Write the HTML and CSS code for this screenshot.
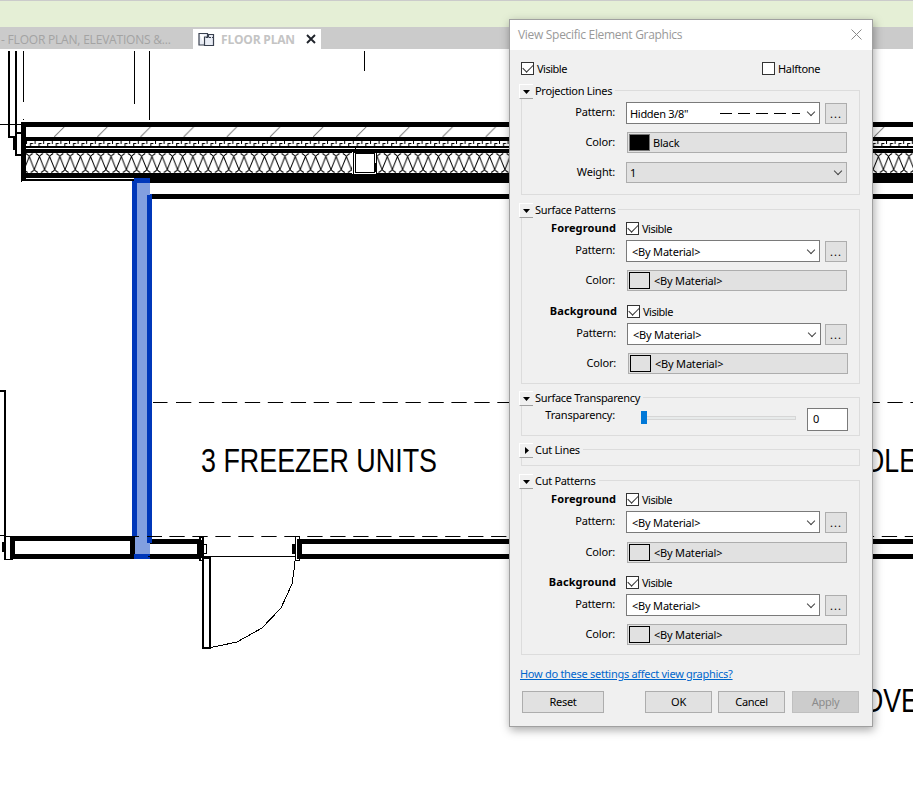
FILE: index.html
```
<!DOCTYPE html>
<html lang="en">
<head>
    <meta charset="UTF-8">
    <meta name="viewport" content="width=device-width, initial-scale=1.0">
    <title>Floor Plan</title>
    <link rel="stylesheet" href="styles.css">
</head>
<body>
    <div class="ribbon"></div>
    <div class="tabs">
        <div class="tab">- FLOOR PLAN, ELEVATIONS &amp;...</div>
        <div class="tab active">
            <svg class="sheet" width="17" height="15" viewBox="0 0 17 15">
                <path d="M1 1.500h8.500v3M1 1v12h5.500M6.500 13.500V5h4V2.500h5v11z" fill="#e9edf5" stroke="#39404f" stroke-width="1.200"/>
                <path d="M6.500 5.500v8M8 5.500h8" fill="none" stroke="#39404f" stroke-dasharray="2 1"/>
            </svg>
            <span>FLOOR PLAN</span>
            <svg class="close" width="10" height="10" viewBox="0 0 10 10">
                <path d="M1 1l8 8M9 1l-8 8" stroke="#1f232b" stroke-width="1.900"/>
            </svg>
        </div>
    </div>

    <svg class="plan" width="913" height="742" viewBox="0 49 913 742">
        <defs>
            <pattern id="brick" x="11" y="127" width="43.150" height="10" patternUnits="userSpaceOnUse">
                <path d="M0 10L10 0" stroke="#777" fill="none"/>
            </pattern>
            <pattern id="teeth" x="26" y="141" width="8.600" height="5" patternUnits="userSpaceOnUse">
                <path d="M0 0h1v3h-1zM4 2h1v3h-1zM5 2h2v1h-2z"/>
            </pattern>
            <g id="loop">
                <path d="M-3.500 19.500L-2 18.500L0 16.500L5.100 3.500L7.100 1.500L8.600.5M13.730 19.500L12.230 18.500L10.230 16.500L5.130 3.500L3.130 1.500L1.630.5" stroke="#000" fill="none"/>
            </g>
            <pattern id="batt" x="24.100" y="153" width="10.230" height="20" patternUnits="userSpaceOnUse">
                <use href="#loop"/>
                <use href="#loop" x="-10.230"/>
                <use href="#loop" x="10.230"/>
            </pattern>
        </defs>

        <!-- left edge -->
        <g shape-rendering="crispEdges">
            <path d="M8 51h2v86h-2zM15 51h2v104h-2zM8 136h7v2h-7zM13 137h2v13h-2zM15 154h7v2h-7zM17 132h5v2h-5zM0 124h22v1h-22z"/>
            <path d="M23 51h1v51h-1zM23 119h1v1h-1zM134 51h1v53h-1zM149 51h1v69h-1zM364 51h1v20h-1z"/>
        </g>

        <!-- exterior wall -->
        <g shape-rendering="crispEdges">
            <path d="M21 122h892v5h-892zM21 122h5v59h-4v1h-1zM26 137h887v4h-887zM26 146h887v2h-887zM26 149h887v4h-887zM26 173h887v5h-887zM26 179h108v2h-108zM150 173h763v10h-763zM150 194h763v5h-763z"/>
            <path d="M26 127h887v10h-887z" fill="url(#brick)"/>
            <path d="M26 141h887v5h-887z" fill="url(#teeth)"/>
            <path d="M26 153h887v20h-887z" fill="url(#batt)"/>
            <path d="M352 152h25v22h-25z" fill="#fff"/>
            <path d="M353 152h24v1h-24zM353 152h1v22h-1zM376 152h1v22h-1z"/>
            <rect x="355.500" y="153.500" width="19" height="19" fill="#fff" stroke="#000"/>
            <path d="M355 148h1v1h-1zM375 163h1v9h-1z"/>
        </g>

        <!-- interior wall below -->
        <g shape-rendering="crispEdges">
            <path d="M0 390h6v170h-2v-168h-4zM0 535h5v1h-5zM2 542h3v10h-3z"/>
            <path d="M5 536h8v1h-8zM5 559h8v1h-8z"/>
            <path fill-rule="evenodd" d="M10 536h125v23h-125zM15 541h115v13h-115z"/>
            <path d="M11 538h1v20h-1z" />
            <path fill-rule="evenodd" d="M150 539h53v20h-53zM150 544h47v10h-47z"/>
            <path d="M199 536h5v25h-5zM297 539h616v5h-616zM297 554h616v5h-616zM297 539h5v20h-5zM292 544h3v10h-3z"/>
            <path d="M201 538h1v2h-1zM201 558h1v2h-1z" fill="#fff"/>
            <rect x="203.500" y="544.500" width="3" height="9" fill="#fff" stroke="#000"/>
            <path d="M295.500 537v24M295 536.500h4.500v2.500M295 560.500h4.500v-2" fill="none" stroke="#000"/>
            <path d="M203 556h92v1h-92z"/>
            <rect x="203" y="558" width="7" height="90" fill="#fff" stroke="#000" stroke-width="2"/>
            <path d="M294.500 561l-.5 9-2 14-11 24-19 20-25 14-26 5.500" fill="none" stroke="#000"/>
        </g>

        <path d="M153 402.500h14.500M176 402.500H913" stroke="#000" stroke-dasharray="15.300 7.650"/>
        <path d="M169.400 536.500H913" stroke="#000" stroke-dasharray="15.300 7.680"/>

        <!-- selected wall -->
        <g shape-rendering="crispEdges">
            <path d="M137 183h13v371h-13z" fill="#829fdf"/>
            <path d="M134 178h16v5h-16zM132 181h5v355h-5zM147 195h5v348h-5zM150 194h2v1h-2zM134 554h16v5h-16z" fill="#0037b9"/>
            <path d="M135 536h2v18h-2z" fill="#829fdf"/>
            <path d="M134 536h5v1h-5zM147 536h15v1h-15zM148 556h4v1h-4z"/>
        </g>

        <g class="room">
            <text x="201" y="472" textLength="236" lengthAdjust="spacingAndGlyphs">3 FREEZER UNITS</text>
            <text x="863.500" y="472" textLength="53.500" lengthAdjust="spacingAndGlyphs">OLE</text>
            <text x="862.500" y="712" textLength="56.400" lengthAdjust="spacingAndGlyphs">OVE</text>
        </g>
    </svg>

    <div class="dialog">
        <div class="title">
            <span>View Specific Element Graphics</span>
            <svg width="11" height="11" viewBox="0 0 11 11"><path d="M.5.5l10 10M10.500.5l-10 10" stroke="#8a8a8a"/></svg>
        </div>
        <div class="content">
            <div class="options">
                <label><i class="check on"></i>Visible</label>
                <label class="halftone"><i class="check"></i>Halftone</label>
            </div>

            <div class="group lines">
                <div class="legend"><i class="toggle"></i><span>Projection Lines</span></div>
                <div class="row">
                    <span class="name">Pattern:</span>
                    <div class="combo">Hidden 3/8"
                        <svg class="dashes" width="80" height="1" viewBox="0 0 80 1"><path d="M0 .5h80" stroke="#000" stroke-dasharray="12 6"/></svg>
                        <i class="arrow"></i>
                    </div>
                    <div class="more">...</div>
                </div>
                <div class="row color">
                    <span class="name">Color:</span>
                    <div class="swatch black"><i></i>Black</div>
                </div>
                <div class="row weight">
                    <span class="name">Weight:</span>
                    <div class="combo wide">1<i class="arrow"></i></div>
                </div>
            </div>

            <div class="group surface">
                <div class="legend"><i class="toggle"></i><span>Surface Patterns</span></div>
                <div class="row head">
                    <b class="name">Foreground</b>
                    <label><i class="check on"></i>Visible</label>
                </div>
                <div class="row">
                    <span class="name">Pattern:</span>
                    <div class="combo material">&lt;By Material&gt;<i class="arrow"></i></div>
                    <div class="more">...</div>
                </div>
                <div class="row color">
                    <span class="name">Color:</span>
                    <div class="swatch"><i></i>&lt;By Material&gt;</div>
                </div>
                <div class="shift">
                    <div class="row head second">
                        <b class="name">Background</b>
                        <label><i class="check on"></i>Visible</label>
                    </div>
                    <div class="row">
                        <span class="name">Pattern:</span>
                        <div class="combo material">&lt;By Material&gt;<i class="arrow"></i></div>
                        <div class="more">...</div>
                    </div>
                    <div class="row color">
                        <span class="name">Color:</span>
                        <div class="swatch"><i></i>&lt;By Material&gt;</div>
                    </div>
                </div>
            </div>

            <div class="group transparency">
                <div class="legend"><i class="toggle"></i><span>Surface Transparency</span></div>
                <div class="row">
                    <span class="name">Transparency:</span>
                    <div class="slider"><i class="thumb"></i><i class="track"></i></div>
                    <div class="number">0</div>
                </div>
            </div>

            <div class="group cutlines">
                <div class="legend"><i class="toggle closed"></i><span>Cut Lines</span></div>
            </div>

            <div class="group cut">
                <div class="legend"><i class="toggle"></i><span>Cut Patterns</span></div>
                <div class="row head">
                    <b class="name">Foreground</b>
                    <label><i class="check on"></i>Visible</label>
                </div>
                <div class="row">
                    <span class="name">Pattern:</span>
                    <div class="combo material">&lt;By Material&gt;<i class="arrow"></i></div>
                    <div class="more">...</div>
                </div>
                <div class="row color">
                    <span class="name">Color:</span>
                    <div class="swatch"><i></i>&lt;By Material&gt;</div>
                </div>
                <div class="row head second">
                    <b class="name">Background</b>
                    <label><i class="check on"></i>Visible</label>
                </div>
                <div class="row">
                    <span class="name">Pattern:</span>
                    <div class="combo material">&lt;By Material&gt;<i class="arrow"></i></div>
                    <div class="more">...</div>
                </div>
                <div class="row color">
                    <span class="name">Color:</span>
                    <div class="swatch"><i></i>&lt;By Material&gt;</div>
                </div>
            </div>

            <a class="help" href="#">How do these settings affect view graphics?</a>

            <div class="buttons">
                <div class="btn reset">Reset</div>
                <div class="btn">OK</div>
                <div class="btn">Cancel</div>
                <div class="btn apply">Apply</div>
            </div>
        </div>
    </div>
</body>
</html>
```
FILE: styles.css
```
*{
    margin: 0;
    padding: 0;
    box-sizing: border-box;
}
body{
    width: 913px;
    height: 791px;
    overflow: hidden;
    position: relative;
    background-color: white;
    font-family: "Noto Sans", "Open Sans", sans-serif;
    font-size: 11px;
    letter-spacing: -0.3px;
    color: black;
}
.ribbon{
    height: 27px;
    background-color: #e5efd6;
    border-top: 1px solid #cbcbcb;
}
.tabs{
    display: flex;
    height: 22px;
    background-color: #cbcbcb;
    align-items: flex-end;
    font-family: "Open Sans", sans-serif;
}
.tab{
    width: 193px;
    height: 20px;
    line-height: 21px;
    padding-left: 1px;
    font-size: 12px;
    letter-spacing: -0.2px;
    color: #a3a3a3;
    white-space: nowrap;
}
.tab.active{
    display: flex;
    align-items: center;
    width: 128px;
    padding-left: 5px;
    background-color: white;
    color: #c4c4c4;
    font-weight: bold;
    letter-spacing: -0.2px;
}
.sheet{
    margin-right: 6px;
}
.close{
    margin-left: 11px;
}
.plan{
    display: block;
}
.room{
    font-family: "Liberation Sans", Arial, sans-serif;
    font-size: 33px;
    letter-spacing: 0;
}
.dialog{
    position: absolute;
    left: 509px;
    top: 19px;
    width: 364px;
    height: 708px;
    background-color: #f0f0f0;
    border: 1px solid #a0a0a0;
    box-shadow: 1px 3px 9px rgba(0,0,0,0.35);
}
.title{
    display: flex;
    align-items: center;
    justify-content: space-between;
    height: 30px;
    padding: 0 10px 2px 8px;
    background-color: white;
    color: #999;
    font-family: "Open Sans", sans-serif;
    font-size: 12px;
    letter-spacing: -0.3px;
}
.content{
    padding: 12px 12px 0 11px;
}
.options, label{
    display: flex;
    align-items: center;
}
label{
    height: 13px;
    gap: 3px;
    letter-spacing: -0.5px;
}
.options label{
    width: 60px;
}
.options .halftone{
    margin-left: 181px;
    letter-spacing: -0.3px;
}
.check{
    position: relative;
    width: 13px;
    height: 13px;
    background-color: white;
    border: 1px solid #333;
}
.check.on::after{
    content: "";
    position: absolute;
    left: 1px;
    top: 1px;
    width: 9px;
    height: 5px;
    border-left: 1.3px solid #333;
    border-bottom: 1.3px solid #333;
    transform: rotate(-45deg);
}
.group{
    position: relative;
    width: 339px;
    border: 1px solid #dcdcdc;
}
.lines{
    height: 105px;
    margin-top: 15px;
    padding-top: 11px;
}
.surface{
    height: 175px;
    margin-top: 14px;
    padding-top: 12px;
}
.transparency{
    height: 39px;
    margin-top: 13px;
    padding-top: 10px;
}
.cutlines{
    height: 17px;
    margin-top: 13px;
}
.cut{
    height: 175px;
    margin-top: 14px;
    padding-top: 12px;
}
.legend{
    position: absolute;
    left: -3px;
    top: -7px;
    display: flex;
    height: 15px;
    padding-right: 3px;
    background-color: #f0f0f0;
    line-height: 13px;
    white-space: nowrap;
}
.toggle{
    width: 14px;
    height: 15px;
    margin-right: 2px;
    border-top: 1px solid white;
    border-left: 1px solid white;
    border-bottom: 1px solid #a0a0a0;
}
.toggle::after{
    content: "";
    display: block;
    margin: 5px 0 0 3px;
    width: 7px;
    height: 4px;
    background-color: black;
    clip-path: polygon(0 0, 100% 0, 50% 100%);
}
.toggle.closed::after{
    margin: 3px 0 0 5px;
    width: 4px;
    height: 7px;
    clip-path: polygon(0 0, 100% 50%, 0 100%);
}
.row{
    display: flex;
    height: 22px;
}
.name{
    width: 93px;
    margin-right: 11px;
    height: 20px;
    line-height: 20px;
    text-align: right;
    letter-spacing: -0.2px;
}
.head{
    height: 13px;
    margin-bottom: 5px;
}
.head .name{
    width: 94px;
    margin-right: 10px;
    height: 13px;
    line-height: 12px;
    letter-spacing: 0.1px;
}
.second{
    margin-top: 14px;
}
.cut .second{
    margin-top: 13px;
}
.color{
    height: 21px;
    margin-top: 8px;
}
.cut .color:nth-child(4){
    margin-top: 9px;
}
.weight{
    height: 21px;
    margin-top: 9px;
}
.shift{
    padding-left: 1px;
}
.combo{
    position: relative;
    width: 194px;
    height: 22px;
    line-height: 21px;
    padding-left: 3px;
    background-color: white;
    border: 1px solid #7a7a7a;
}
.combo.material{
    padding-left: 5px;
    letter-spacing: -0.2px;
}
.combo.wide{
    width: 221px;
    height: 21px;
    line-height: 20px;
    background-color: #e1e1e1;
    border-color: #adadad;
}
.dashes{
    position: absolute;
    right: 19px;
    top: 10px;
}
.arrow{
    position: absolute;
    right: 5px;
    top: 6px;
    width: 6px;
    height: 6px;
    border-right: 1px solid #444;
    border-bottom: 1px solid #444;
    transform: rotate(45deg);
}
.wide .arrow{
    top: 5px;
}
.more{
    width: 22px;
    height: 21px;
    margin: 1px 0 0 5px;
    line-height: 19px;
    text-align: center;
    letter-spacing: 1px;
    background-color: #e1e1e1;
    border: 1px solid #adadad;
}
.shift .more{
    margin-left: 4px;
}
.swatch{
    display: flex;
    align-items: center;
    width: 220px;
    height: 21px;
    margin-left: 1px;
    padding-left: 1px;
    background-color: #e1e1e1;
    border: 1px solid #adadad;
    letter-spacing: -0.2px;
}
.swatch i{
    width: 21px;
    height: 17px;
    margin-right: 4px;
    border: 1px solid black;
}
.swatch.black i{
    margin-right: 3px;
    background-color: black;
    border-color: #777;
}
.slider{
    display: flex;
    align-items: center;
    width: 155px;
    height: 13px;
    margin: 3px 0 0 15px;
}
.thumb{
    width: 6px;
    height: 13px;
    background-color: #0078d7;
}
.track{
    width: 149px;
    height: 4px;
    background-color: #e7eaea;
    border: 1px solid #d6d6d6;
    border-left: 0;
}
.transparency .name{
    height: 15px;
    line-height: 14px;
}
.number{
    width: 41px;
    height: 23px;
    margin-left: 11px;
    padding-left: 5px;
    line-height: 19px;
    background-color: white;
    border: 1px solid #7a7a7a;
}
.help{
    display: block;
    height: 15px;
    margin: 11px 0 0 -1px;
    line-height: 15px;
    color: #0066cc;
    white-space: nowrap;
    letter-spacing: -0.28px;
}
.buttons{
    display: flex;
    gap: 6px;
    margin: 10px 0 0 1px;
}
.btn{
    width: 67px;
    height: 22px;
    line-height: 20px;
    text-align: center;
    background-color: #e1e1e1;
    border: 1px solid #adadad;
}
.reset{
    width: 82px;
    margin-right: 35px;
}
.apply{
    margin-left: 1px;
    color: #8b8b8b;
    background-color: #ccc;
    border-color: #bfbfbf;
}
```
